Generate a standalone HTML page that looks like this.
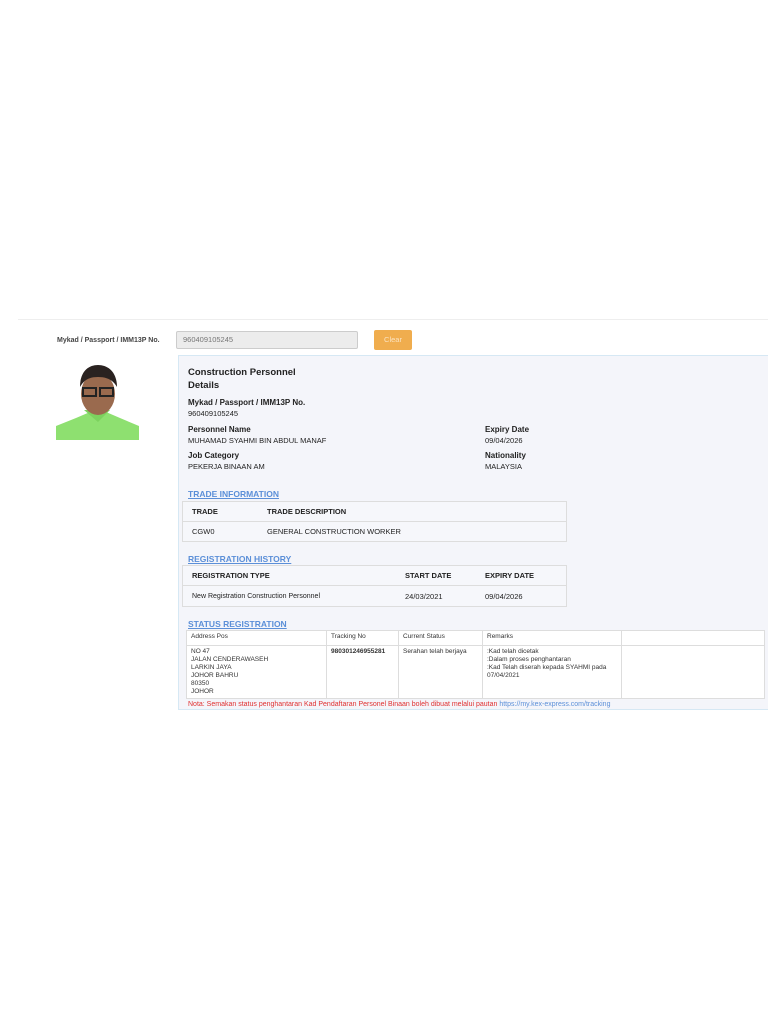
<!DOCTYPE html><html><head><style>
body{margin:0;width:768px;height:1024px;background:#fff;font-family:"Liberation Sans",sans-serif;position:relative;overflow:hidden;color:#222}
.a{position:absolute;white-space:nowrap}
.l{font-size:8px;font-weight:bold}
.v{font-size:7.5px}
.h{font-size:8.5px;font-weight:bold;color:#5b8fd8;text-decoration:underline}
table{border-collapse:collapse;position:absolute;background:#f6f7fb}
.t{border:1px solid #ddd}
.t td{border:none;border-top:1px solid #ddd;font-size:7.5px;padding:0 0 0 9px;vertical-align:middle}
.st td{border:1px solid #ddd;font-size:6.5px;color:#333;padding:2px 4px;vertical-align:top;background:#fff}
</style></head><body>
<div class="a" style="left:18px;top:319px;width:750px;border-top:1px solid #eee"></div>
<div class="a" style="left:57px;top:337px;font-size:7px;font-weight:bold;color:#444">Mykad / Passport / IMM13P No.</div>
<div class="a" style="left:176px;top:331px;width:180px;height:16px;background:#ececec;border:1px solid #ccc;border-radius:2px;font-size:7.5px;color:#777;line-height:16px;text-indent:6px">960409105245</div>
<div class="a" style="left:374px;top:330px;width:38px;height:20px;background:#f0ad4e;border-radius:2px;color:#fbe3c0;font-size:7.5px;text-align:center;line-height:20px">Clear</div>
<svg class="a" style="left:56px;top:362px" width="83" height="78"><rect width="83" height="78" fill="#fff"/><path d="M0 78V64l20-8 14-6h16l14 6 19 8v14z" fill="#8ee070"/><path d="M28 48l14 12 12-12z" fill="#7cd25e"/><ellipse cx="42" cy="32" rx="17" ry="21" fill="#9a6a4e"/><path d="M24 25c0-15 8-22 18-22s19 7 19 22c-4-7-10-10-19-10s-14 3-18 10z" fill="#2a2220"/><rect x="27" y="26" width="13" height="8" fill="none" stroke="#222" stroke-width="2"/><rect x="44" y="26" width="13" height="8" fill="none" stroke="#222" stroke-width="2"/></svg>
<div class="a" style="left:178px;top:355px;width:590px;height:353px;background:#f4f5fa;border:1px solid #d6e8f4;border-right:none"></div>
<div class="a" style="left:188px;top:366px;font-size:9.5px;font-weight:bold;line-height:13px">Construction Personnel<br>Details</div>
<div class="a l" style="left:188px;top:398px">Mykad / Passport / IMM13P No.</div>
<div class="a v" style="left:188px;top:409px">960409105245</div>
<div class="a l" style="left:188px;top:425px">Personnel Name</div>
<div class="a v" style="left:188px;top:436px">MUHAMAD SYAHMI BIN ABDUL MANAF</div>
<div class="a l" style="left:188px;top:451px">Job Category</div>
<div class="a v" style="left:188px;top:462px">PEKERJA BINAAN AM</div>
<div class="a l" style="left:485px;top:425px">Expiry Date</div>
<div class="a v" style="left:485px;top:436px">09/04/2026</div>
<div class="a l" style="left:485px;top:451px">Nationality</div>
<div class="a v" style="left:485px;top:462px">MALAYSIA</div>
<div class="a h" style="left:188px;top:489px">TRADE INFORMATION</div>
<table class="t" style="left:182px;top:501px;width:385px"><tr style="height:20px"><td style="width:66px;font-weight:bold">TRADE</td><td style="font-weight:bold">TRADE DESCRIPTION</td></tr><tr style="height:20px"><td>CGW0</td><td>GENERAL CONSTRUCTION WORKER</td></tr></table>
<div class="a h" style="left:188px;top:554px">REGISTRATION HISTORY</div>
<table class="t" style="left:182px;top:565px;width:385px"><tr style="height:20px"><td style="width:204px;font-weight:bold">REGISTRATION TYPE</td><td style="width:71px;font-weight:bold">START DATE</td><td style="font-weight:bold">EXPIRY DATE</td></tr><tr style="height:21px"><td style="font-size:7px">New Registration Construction Personnel</td><td>24/03/2021</td><td>09/04/2026</td></tr></table>
<div class="a h" style="left:188px;top:619px">STATUS REGISTRATION</div>
<table class="st" style="left:186px;top:630px;width:579px"><tr style="height:15px"><td style="width:131px">Address Pos</td><td style="width:63px">Tracking No</td><td style="width:75px">Current Status</td><td style="width:130px">Remarks</td><td></td></tr>
<tr style="height:53px"><td style="line-height:8px">NO 47<br>JALAN CENDERAWASEH<br>LARKIN JAYA<br>JOHOR BAHRU<br>80350<br>JOHOR</td><td style="font-weight:bold">980301246955281</td><td>Serahan telah berjaya</td><td style="line-height:8px">:Kad telah dicetak<br>:Dalam proses penghantaran<br>:Kad Telah diserah kepada SYAHMI pada<br>07/04/2021</td><td></td></tr></table>
<div class="a" style="left:188px;top:701px;font-size:7px;color:#e03030">Nota: Semakan status penghantaran Kad Pendaftaran Personel Binaan boleh dibuat melalui pautan <span style="color:#5b8fd8">https://my.kex-express.com/tracking</span></div>
</body></html>
